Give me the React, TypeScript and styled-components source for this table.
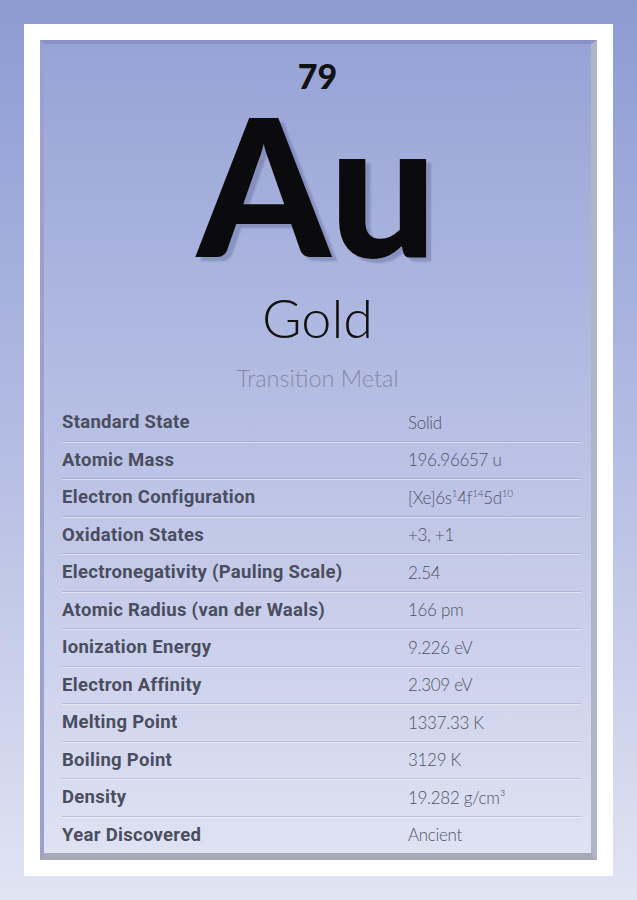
import React from 'react';
import styled, { createGlobalStyle } from 'styled-components';

const GlobalStyle = createGlobalStyle`
  html, body {
    margin: 0;
    padding: 0;
  }
  body {
    width: 637px;
    height: 900px;
    overflow: hidden;
    background: linear-gradient(180deg, #8d9bd3 0%, #b4bde3 50%, #e1e4f3 100%);
    font-family: Lato, "Liberation Sans", sans-serif;
  }
`

const Frame = styled.div`
  box-sizing: border-box;
  margin: 24px;
  width: 589px;
  height: 852px;
  padding: 16px;
  background: #ffffff;
`
const Card = styled.div`
  box-sizing: border-box;
  width: 557px;
  height: 820px;
  display: flex;
  flex-direction: column;
  align-items: center;
  background: linear-gradient(180deg, #97a3d6 0%, #b9c1e5 50%, #dfe2f2 100%);
  border-style: solid;
  border-width: 4px 6px 7px 4px;
  border-color: #8890c4 #b0b4c8 #a6a9b7 #9aa1cc;
`
const Number = styled.div`
  margin-top: 12px;
  font-family: Lato, sans-serif;
  font-weight: 900;
  font-size: 34px;
  line-height: 40px;
  color: #111111;
`
const Symbol = styled.div`
  margin-top: 12px;
  font-family: Lato, sans-serif;
  font-weight: 900;
  font-size: 190px;
  line-height: 150px;
  letter-spacing: 1px;
  color: #0b0b0d;
  text-shadow: 5px 4px 2px rgba(80, 90, 135, 0.35);
`
const Name = styled.div`
  margin-top: 28px;
  font-family: Lato, sans-serif;
  font-weight: 300;
  font-size: 54px;
  line-height: 64px;
  color: #111111;
`
const Category = styled.div`
  margin-top: 13px;
  font-family: Lato, sans-serif;
  font-weight: 300;
  font-size: 23.5px;
  line-height: 30px;
  color: #8589a4;
`
const Table = styled.div`
  align-self: stretch;
  margin: 11px 10px 0 18px;
  display: flex;
  flex-direction: column;
`
const Row = styled.div<{ $last?: boolean }>`
  box-sizing: border-box;
  height: 37.5px;
  display: grid;
  grid-template-columns: 346px 1fr;
  align-items: center;
  border-bottom: 1px solid ${p => p.$last ? 'transparent' : 'rgba(130, 138, 180, 0.35)'};
  box-shadow: ${p => p.$last ? 'none' : '0 1px 0 rgba(255, 255, 255, 0.45)'};
`
const Label = styled.div`
  font-family: Roboto, "Liberation Sans", sans-serif;
  font-weight: 700;
  font-size: 18.5px;
  letter-spacing: 0.3px;
  color: #4a4e5f;
  white-space: nowrap;
`
const Value = styled.div`
  font-family: Lato, sans-serif;
  font-weight: 300;
  font-size: 17px;
  letter-spacing: -0.3px;
  color: #515466;
  white-space: nowrap;
  sup {
    font-size: 10px;
    line-height: 0;
    vertical-align: 7px;
  }
`

const rows: { label: string; value: React.ReactNode }[] = [
  { label: 'Standard State', value: 'Solid' },
  { label: 'Atomic Mass', value: '196.96657 u' },
  { label: 'Electron Configuration', value: <>[Xe]6s<sup>1</sup>4f<sup>14</sup>5d<sup>10</sup></> },
  { label: 'Oxidation States', value: '+3, +1' },
  { label: 'Electronegativity (Pauling Scale)', value: '2.54' },
  { label: 'Atomic Radius (van der Waals)', value: '166 pm' },
  { label: 'Ionization Energy', value: '9.226 eV' },
  { label: 'Electron Affinity', value: '2.309 eV' },
  { label: 'Melting Point', value: '1337.33 K' },
  { label: 'Boiling Point', value: '3129 K' },
  { label: 'Density', value: '19.282 g/cm³' },
  { label: 'Year Discovered', value: 'Ancient' },
]

function App() {
  return (
    <>
      <GlobalStyle />
      <Frame>
        <Card>
          <Number>79</Number>
          <Symbol>Au</Symbol>
          <Name>Gold</Name>
          <Category>Transition Metal</Category>
          <Table>
            {rows.map((r, i) => (
              <Row key={r.label} $last={i === rows.length - 1}>
                <Label>{r.label}</Label>
                <Value>{r.value}</Value>
              </Row>
            ))}
          </Table>
        </Card>
      </Frame>
    </>
  );
}

export default App;
